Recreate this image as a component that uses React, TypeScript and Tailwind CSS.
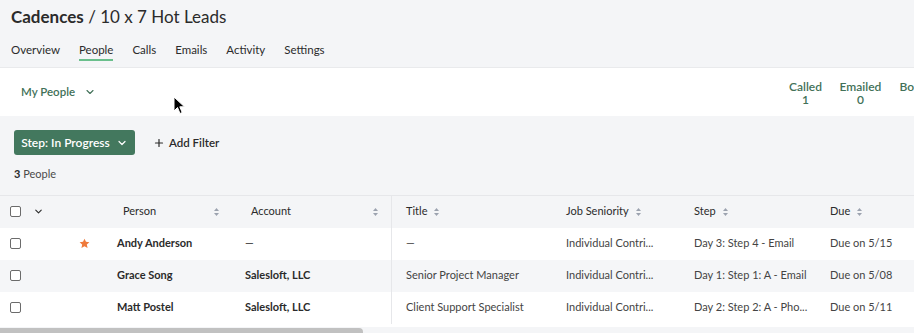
import { ChevronDown, Plus } from "lucide-react";

const font = { fontFamily: "Lato, 'Open Sans', sans-serif" };

const tabs = ["Overview", "People", "Calls", "Emails", "Activity", "Settings"];

const stats = [
  { label: "Called", value: "1", w: "w-[55px]" },
  { label: "Emailed", value: "0", w: "w-[55px]" },
  { label: "Bounced", value: "0", w: "w-[70px]" },
];

const rows = [
  { name: "Andy Anderson", star: true, account: "—", title: "—", seniority: "Individual Contri...", step: "Day 3: Step 4 - Email", due: "Due on 5/15" },
  { name: "Grace Song", star: false, account: "Salesloft, LLC", title: "Senior Project Manager", seniority: "Individual Contri...", step: "Day 1: Step 1: A - Email", due: "Due on 5/08" },
  { name: "Matt Postel", star: false, account: "Salesloft, LLC", title: "Client Support Specialist", seniority: "Individual Contri...", step: "Day 2: Step 2: A - Pho...", due: "Due on 5/11" },
];

function Sort() {
  return (
    <svg width="7" height="10" viewBox="0 0 7 10" className="shrink-0">
      <path d="M3.5 1 L6 4 H1 Z" fill="#9ca3af" />
      <path d="M3.5 9 L6 6 H1 Z" fill="#9ca3af" />
    </svg>
  );
}

function Box() {
  return <span className="inline-block size-[11px] rounded-[2px] border-[1.5px] border-[#6b6b6b] bg-white" />;
}

function Star() {
  return (
    <svg width="11" height="11" viewBox="0 0 24 24">
      <path d="M12 1.5l3.2 6.9 7.5.8-5.6 5.1 1.6 7.4L12 17.9l-6.7 3.8 1.6-7.4-5.6-5.1 7.5-.8z" fill="#ef7a3b" />
    </svg>
  );
}

export default function App() {
  return (
    <div className="h-[333px] w-[914px] overflow-hidden bg-[#f4f5f7] text-[#2b2b2b]" style={font}>
      <div className="relative">
        <div className="px-[11px] pt-[5px]">
          <h1 className="text-[17px] leading-[24px] text-[#2b2b2b]">
            <span className="font-bold">Cadences</span> / 10 x 7 Hot Leads
          </h1>
          <nav className="mt-[14px] flex gap-[19px] text-[11.5px] leading-[14px]">
            {tabs.map((t) => (
              <span key={t} className={`pb-[2px] ${t === "People" ? "border-b-2 border-[#6abf8c]" : "border-b-2 border-transparent"}`}>
                {t}
              </span>
            ))}
          </nav>
        </div>

        <div className="mt-[6px] flex h-[49px] items-center justify-between overflow-hidden border-t border-[#e9eaec] bg-white pl-[21px]">
          <div className="flex items-center gap-[9px] text-[11.5px] font-semibold text-[#427158]">
            My People
            <ChevronDown size={12} strokeWidth={2.2} />
          </div>
          <div className="mr-[-44px] flex shrink-0 pt-[2px] text-center text-[12px] font-semibold text-[#427158]">
            {stats.map((s) => (
              <div key={s.label} className={`${s.w} flex flex-col leading-[13px]`}>
                <span>{s.label}</span>
                <span>{s.value}</span>
              </div>
            ))}
          </div>
        </div>

        <svg className="absolute left-[173px] top-[96px]" width="14" height="20" viewBox="0 0 14 20">
          <path d="M1 1 L1 15 L4.5 11.5 L7 17.5 L9.2 16.5 L6.8 10.8 L11.5 10.8 Z" fill="#000" stroke="#fff" strokeWidth="1" />
        </svg>

        <div className="px-[14px] pt-[14px]">
          <div className="flex items-center gap-[18px]">
            <button className="flex h-[25px] w-[121px] items-center justify-center gap-[6px] rounded-[3px] bg-[#43785e] text-[12px] font-semibold text-white">
              Step: In Progress
              <ChevronDown size={12} strokeWidth={2.4} />
            </button>
            <span className="flex items-center gap-[4px] text-[11.5px] font-semibold">
              <Plus size={12} strokeWidth={2.4} />
              Add Filter
            </span>
          </div>
          <div className="mt-[11px] text-[11px] text-[#4a4a4a]">
            <span className="font-bold text-[#2b2b2b]">3</span> People
          </div>
        </div>

        <div className="mt-[12px] border-t border-[#e6e7ea] text-[11px]">
          <div className="flex h-[32px] items-center bg-[#f4f5f7]">
            <div className="flex w-[103px] items-center gap-[12px] pl-[10px]">
              <Box />
              <ChevronDown size={11} strokeWidth={2.4} />
            </div>
            <div className="flex w-[132px] items-center justify-between pl-[20px] pr-[15px]">
              Person <Sort />
            </div>
            <div className="flex h-full w-[157px] items-center justify-between border-r border-[#e6e7ea] pl-[16px] pr-[12px]">
              Account <Sort />
            </div>
            <div className="flex w-[160px] items-center gap-[6px] pl-[14px]">Title <Sort /></div>
            <div className="flex w-[128px] items-center gap-[6px] pl-[14px]">Job Seniority <Sort /></div>
            <div className="flex w-[136px] items-center gap-[6px] pl-[14px]">Step <Sort /></div>
            <div className="flex flex-1 items-center gap-[6px] pl-[14px]">Due <Sort /></div>
          </div>
          {rows.map((r, i) => (
            <div key={r.name} className={`flex h-[32px] items-center ${i % 2 === 1 ? "bg-[#f5f6f8]" : "bg-white"}`}>
              <div className="flex w-[103px] items-center justify-between pl-[10px] pr-[13px]">
                <Box />
                {r.star && <Star />}
              </div>
              <div className="w-[132px] pl-[14px] font-bold">{r.name}</div>
              <div className={`flex h-full w-[157px] items-center border-r border-[#e6e7ea] pl-[10px] ${r.account === "—" ? "" : "font-bold"}`}>
                {r.account}
              </div>
              <div className="w-[160px] pl-[14px] text-[#444]">{r.title}</div>
              <div className="w-[128px] pl-[14px] text-[#444]">{r.seniority}</div>
              <div className="w-[136px] pl-[14px] text-[#444]">{r.step}</div>
              <div className="flex-1 pl-[14px] text-[#444]">{r.due}</div>
            </div>
          ))}
          <div className="h-[3px] bg-white" />
          <div className="h-[12px] bg-[#f4f5f7] pt-[1px]">
            <div className="h-[8px] w-[363px] rounded-r-[4px] bg-[#c1c1c1]" />
          </div>
        </div>
      </div>
    </div>
  );
}
